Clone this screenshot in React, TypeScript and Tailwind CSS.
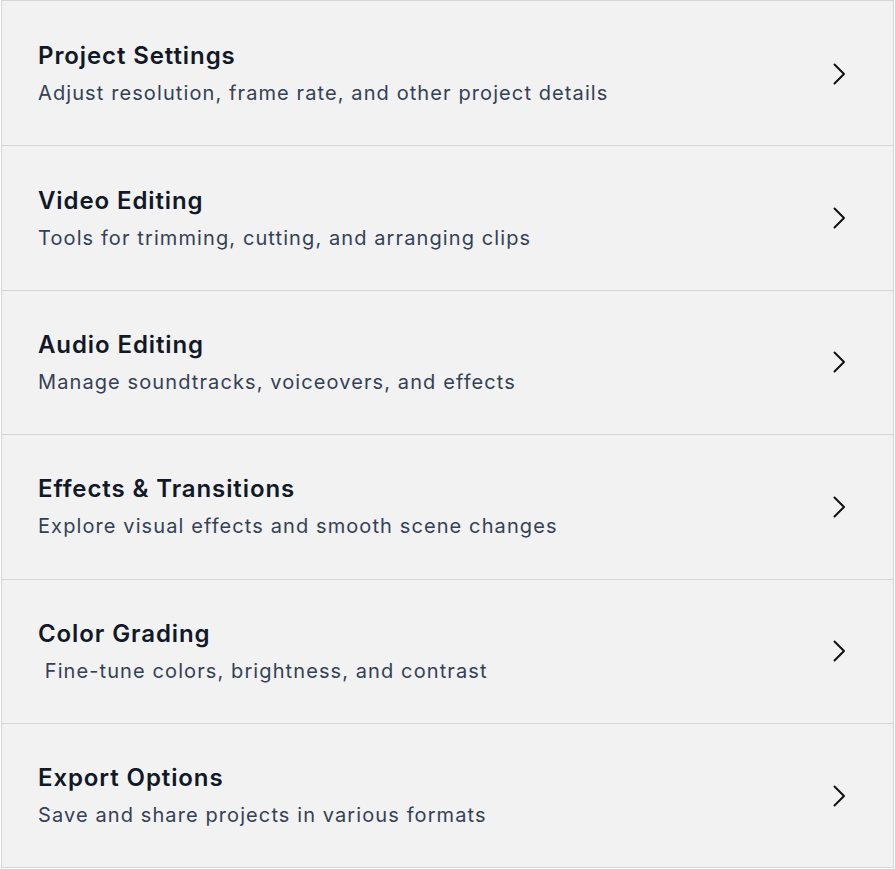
import React from "react";

const items = [
  { title: "Project Settings", desc: "Adjust resolution, frame rate, and other project details" },
  { title: "Video Editing", desc: "Tools for trimming, cutting, and arranging clips" },
  { title: "Audio Editing", desc: "Manage soundtracks, voiceovers, and effects" },
  { title: "Effects & Transitions", desc: "Explore visual effects and smooth scene changes" },
  { title: "Color Grading", desc: "\u00a0Fine-tune colors, brightness, and contrast" },
  { title: "Export Options", desc: "Save and share projects in various formats" },
];

function Chevron() {
  return (
    <svg width="16" height="24" viewBox="0 0 16 24" fill="none" className="shrink-0">
      <polyline points="2.5,2.5 12,12 2.5,21.5" stroke="#111111" strokeWidth="2" strokeLinecap="round" strokeLinejoin="round" />
    </svg>
  );
}

export default function App() {
  return (
    <div className="bg-white min-h-[869px]" style={{ fontFamily: "Inter, 'Noto Sans', sans-serif" }}>
      <div className="ml-px w-[893px] border-x border-t border-[#d4d6d9] bg-[#f2f2f2] pt-px">
        {items.map((it) => (
          <div key={it.title} className="flex h-[144.4px] items-center justify-between border-b border-[#d4d6d9] pl-[36px] pr-[45px]">
            <div className="flex flex-col">
              <div className="text-[24px] font-semibold leading-[32px] tracking-[0.9px] text-[#111827]">{it.title}</div>
              <div className="mt-[7px] text-[20px] leading-[28px] tracking-[1.1px] text-[#334155] whitespace-pre">{it.desc}</div>
            </div>
            <Chevron />
          </div>
        ))}
      </div>
    </div>
  );
}
